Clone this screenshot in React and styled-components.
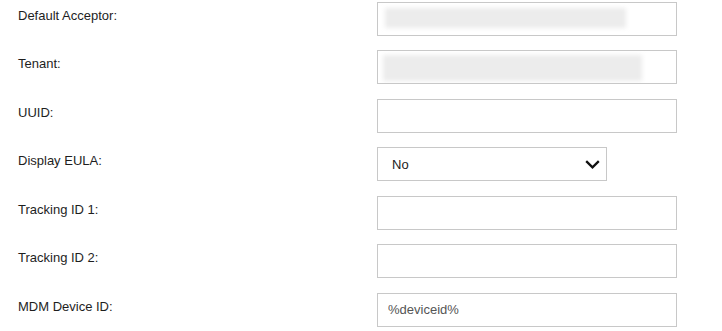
import React from "react";
import styled, { createGlobalStyle } from "styled-components";

const Global = createGlobalStyle`
  html, body { margin: 0; padding: 0; background: #fff; }
  body { font-family: "Liberation Sans", Arial, sans-serif; font-size: 13px; color: #222; }
`;

const Form = styled.div`
  display: grid;
  grid-template-columns: 359px 300px;
  grid-auto-rows: 34px;
  row-gap: 14.5px;
  padding: 1.99px 0 0 18px;
`;

const Label = styled.div`
  font-size: 13px;
  line-height: 15px;
  color: #1e1e1e;
  padding-top: 6px;
`;

const boxStyles = `
  box-sizing: border-box;
  height: 34px;
  border: 1px solid #c8c8c8;
  background: #fff;
  font-family: "Liberation Sans", Arial, sans-serif;
  font-size: 13px;
`;

const TextInput = styled.input`
  ${boxStyles}
  width: 300px;
  padding: 0 10px;
  color: #555;
  outline: none;
`;

const MaskedBox = styled.div`
  ${boxStyles}
  width: 300px;
  position: relative;
  overflow: hidden;
`;

const Blur = styled.span`
  position: absolute;
  left: ${(p) => p.$left}px;
  top: ${(p) => p.$top}px;
  width: ${(p) => p.$width}px;
  height: ${(p) => p.$height}px;
  background: #ececec;
  filter: blur(2px);
`;

const SelectWrap = styled.div`
  position: relative;
  width: 230px;
  height: 34px;
`;

const Select = styled.select`
  ${boxStyles}
  width: 230px;
  appearance: none;
  -webkit-appearance: none;
  padding: 0 30px 0 14px;
  color: #222;
  outline: none;
  border-radius: 0;
`;

const Chevron = styled.svg`
  position: absolute;
  right: 7px;
  top: 13px;
  pointer-events: none;
`;

const rows = [
  { label: "Default Acceptor:", kind: "masked", blur: { left: 7, top: 5, width: 241, height: 20 } },
  { label: "Tenant:", kind: "masked", blur: { left: 5, top: 4, width: 259, height: 26 } },
  { label: "UUID:", kind: "text", value: "" },
  { label: "Display EULA:", kind: "select" },
  { label: "Tracking ID 1:", kind: "text", value: "" },
  { label: "Tracking ID 2:", kind: "text", value: "" },
  { label: "MDM Device ID:", kind: "text", value: "%deviceid%" },
];

export default function App() {
  return (
    <>
      <Global />
      <Form>
        {rows.map((r) => (
          <React.Fragment key={r.label}>
            <Label>{r.label}</Label>
            {r.kind === "masked" && (
              <MaskedBox>
                <Blur $left={r.blur.left} $top={r.blur.top} $width={r.blur.width} $height={r.blur.height} />
              </MaskedBox>
            )}
            {r.kind === "text" && <TextInput defaultValue={r.value} />}
            {r.kind === "select" && (
              <SelectWrap>
                <Select defaultValue="No">
                  <option>No</option>
                  <option>Yes</option>
                </Select>
                <Chevron width="15" height="9" viewBox="0 0 15 9">
                  <path d="M1.2 1.2 L7.5 7.3 L13.8 1.2" fill="none" stroke="#111" strokeWidth="2.3" />
                </Chevron>
              </SelectWrap>
            )}
          </React.Fragment>
        ))}
      </Form>
    </>
  );
}
